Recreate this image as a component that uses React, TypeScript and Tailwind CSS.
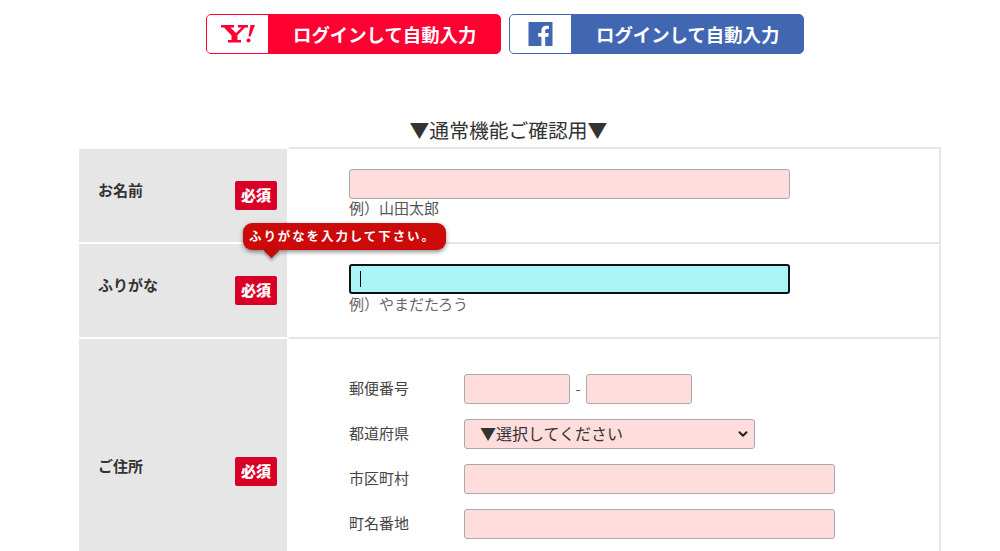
import React from 'react';
import {ChevronDown} from 'lucide-react';

const Badge = () => (
    <span className="w-[42px] h-[29px] shrink-0 flex items-center justify-center rounded-[2px] bg-[#d90026] text-white text-[15px] font-black leading-none pb-[2px]">必須</span>
);

const Row = ({label, h, children}: {label: string; h: string; children: React.ReactNode}) => (
    <div className="flex gap-[2px]">
        <div className={`w-[208px] mt-[2px] ${h} bg-[#e6e6e6] flex items-center pl-[19px] pr-[10px] justify-between`}>
            <span className="text-[15px] font-bold text-[#333] pb-[10px]">{label}</span>
            <Badge/>
        </div>
        <div className="flex-1 border-t-2 border-r-2 border-[#e6e6e6] pl-[60px]">
            {children}
        </div>
    </div>
);

const TextBox = ({w}: {w: string}) => (
    <input type="text" className={`${w} h-[30px] block bg-[#ffdddc] border border-[#aaa] rounded-[3px]`}/>
);

const AddressRow = ({label, children}: {label: string; children: React.ReactNode}) => (
    <div className="flex items-center h-[30px] mb-[15px]">
        <span className="w-[115px] text-[15px] text-[#444] pb-[2px]">{label}</span>
        {children}
    </div>
);

export default function App() {
    return (
        <div className="w-[1000px] h-[551px] overflow-hidden bg-white font-['Noto_Sans_CJK_JP','Liberation_Sans',sans-serif]">
            {/* Login buttons */}
            <div className="flex gap-2 pt-[14px] ml-[206px]">
                <div className="w-[295px] h-10 flex rounded-[5px] border border-[#ff0033] bg-[#ff0033] overflow-hidden">
                    <div className="w-[61px] bg-white flex items-center justify-center">
                        <svg width="34" height="18" viewBox="0 0 34 18" fill="#ff0033">
                            <polygon points="0,0 13,0 13,2.5 9.5,2.5 15,8 20.5,2.5 17,2.5 17,0 27,0 27,2.5 24,2.5 16.5,10 16.5,15 20,15 20,17.500 7,17.500 7,15 10.500,15 10.500,10.500 3,2.500 0,2.500"/>
                            <polygon points="29.500,0 34,0 29.500,11.500 27.500,11.500"/>
                            <circle cx="27.500" cy="15.500" r="2"/>
                        </svg>
                    </div>
                    <div className="flex-1 pl-[25px] text-white text-[18.400px] font-bold leading-[38px] whitespace-nowrap">ログインして自動入力</div>
                </div>
                <div className="w-[295px] h-10 flex rounded-[5px] border border-[#4267b2] bg-[#4267b2] overflow-hidden">
                    <div className="w-[61px] bg-white flex items-center justify-center">
                        <svg width="25" height="24" viewBox="0 0 24 24">
                            <rect width="24" height="24" fill="#4267b2"/>
                            <path fill="#fff" d="M16.700 24v-9.300h3.100l.5-3.600h-3.600V8.800c0-1 .3-1.800 1.800-1.800h1.900V3.800c-.3 0-1.500-.1-2.800-.1-2.800 0-4.700 1.700-4.700 4.800v2.600H9.700v3.600h3.200V24z"/>
                        </svg>
                    </div>
                    <div className="flex-1 pl-[25px] text-white text-[18.400px] font-bold leading-[38px] whitespace-nowrap">ログインして自動入力</div>
                </div>
            </div>

            <div className="ml-[79px] w-[862px] mt-[63px] relative">
                <div className="h-[30px] text-center text-[19.800px] leading-[26px] text-[#333] pr-[3px]">▼通常機能ご確認用▼</div>

                <Row label="お名前" h="h-[93px]">
                    <div className="pt-5">
                        <TextBox w="w-[441px]"/>
                        <p className="text-[15px] leading-[18px] text-[#555]">例）山田太郎</p>
                    </div>
                </Row>

                <Row label="ふりがな" h="h-[93px]">
                    <div className="pt-5">
                        <div className="relative w-[441px]">
                            <input type="text" className="w-[441px] h-[30px] block bg-[#aaf6f7] border-2 border-[#111] rounded-[3px] caret-transparent"/>
                            <div className="absolute left-[11px] top-[7px] w-px h-4 bg-black"/>
                        </div>
                        <p className="text-[15px] leading-5 text-[#666]">例）やまだたろう</p>
                    </div>
                </Row>

                <Row label="ご住所" h="h-[265px]">
                    <div className="pt-[35px]">
                        <AddressRow label="郵便番号">
                            <TextBox w="w-[106px]"/>
                            <span className="w-4 text-center text-[15px] text-[#555]">-</span>
                            <TextBox w="w-[106px]"/>
                        </AddressRow>
                        <AddressRow label="都道府県">
                            <div className="relative w-[291px]">
                                <select className="appearance-none block w-[291px] h-[30px] pl-[15px] pb-[2px] bg-[#ffdddc] border border-[#aaa] rounded-[3px] text-[16px] text-[#333]">
                                    <option>▼選択してください</option>
                                </select>
                                <ChevronDown size={14} strokeWidth={3.5} className="absolute right-[5px] top-[8px] text-[#222]"/>
                            </div>
                        </AddressRow>
                        <AddressRow label="市区町村">
                            <TextBox w="w-[371px]"/>
                        </AddressRow>
                        <AddressRow label="町名番地">
                            <TextBox w="w-[371px]"/>
                        </AddressRow>
                    </div>
                </Row>

                {/* Validation balloon */}
                <div className="absolute left-[164px] top-[106px] w-[203px] h-[27px] rounded-[9px] bg-[#cc0a0a] shadow-[0_2px_4px_rgba(0,0,0,0.45)] text-white">
                    <div className="absolute left-[23px] top-[22px] w-[11px] h-[11px] rotate-45 bg-[#c40a0a] shadow-[2px_2px_3px_rgba(0,0,0,0.3)]"/>
                    <div className="relative pl-[6px] text-[12.500px] font-bold leading-[26px] tracking-[1.900px] whitespace-nowrap">ふりがなを入力して下さい。</div>
                </div>
            </div>
        </div>
    );
}
